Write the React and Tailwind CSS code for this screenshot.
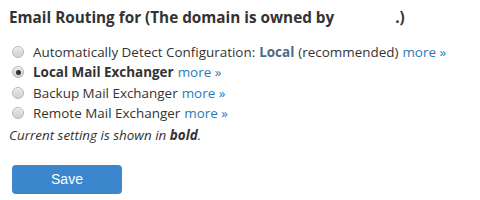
import React from 'react';

const options = [
    { id: 'auto', label: 'Automatically Detect Configuration:', extra: true },
    { id: 'local', label: 'Local Mail Exchanger', bold: true, checked: true },
    { id: 'backup', label: 'Backup Mail Exchanger' },
    { id: 'remote', label: 'Remote Mail Exchanger' },
];

const Radio = ({ checked }) => (
    <span className="w-[12px] h-[12px] rounded-full border border-[#b5b5b5] bg-gradient-to-b from-[#e6e6e6] to-[#d2d2d2] flex items-center justify-center shrink-0 shadow-[inset_0_1px_1px_rgba(255,255,255,0.8)]">
        {checked && <span className="w-[5px] h-[5px] rounded-full bg-[#333]" />}
    </span>
);

const More = () => (
    <a className="text-[#2b7bb9] ml-[4px] cursor-pointer">more »</a>
);

export default function App() {
    return (
        <div className="w-[480px] h-[200px] bg-white text-[#333] font-['Open_Sans',sans-serif] overflow-hidden">
            <h2 className="pt-[6px] pl-[9px] text-[15.3px] leading-[22px] font-bold text-[#333]">
                Email Routing for (The domain is owned by <span className="inline-block w-[57px]" />.)
            </h2>

            <div className="mt-[14px] pl-[12px] flex flex-col text-[13.45px]">
                {options.map((opt) => (
                    <label key={opt.id} className="flex items-center h-[20.3px] cursor-pointer">
                        <Radio checked={opt.checked} />
                        <span className={`ml-[9px] ${opt.bold ? 'font-bold' : ''}`}>{opt.label}</span>
                        {opt.extra && (
                            <>
                                <span className="ml-[4px] font-bold text-[#4d6a86]">Local</span>
                                <span className="ml-[4px]">(recommended)</span>
                            </>
                        )}
                        <More />
                    </label>
                ))}
            </div>
            <p className="mt-[4px] pl-[9px] text-[13.45px] italic leading-[16px]">
                Current setting is shown in <b>bold</b>.
            </p>

            <button className="mt-[22px] ml-[12px] w-[110px] h-[29px] rounded-[4px] bg-[#3b86cc] text-white text-[14px] font-['Liberation_Sans',sans-serif]">
                Save
            </button>
        </div>
    );
}
